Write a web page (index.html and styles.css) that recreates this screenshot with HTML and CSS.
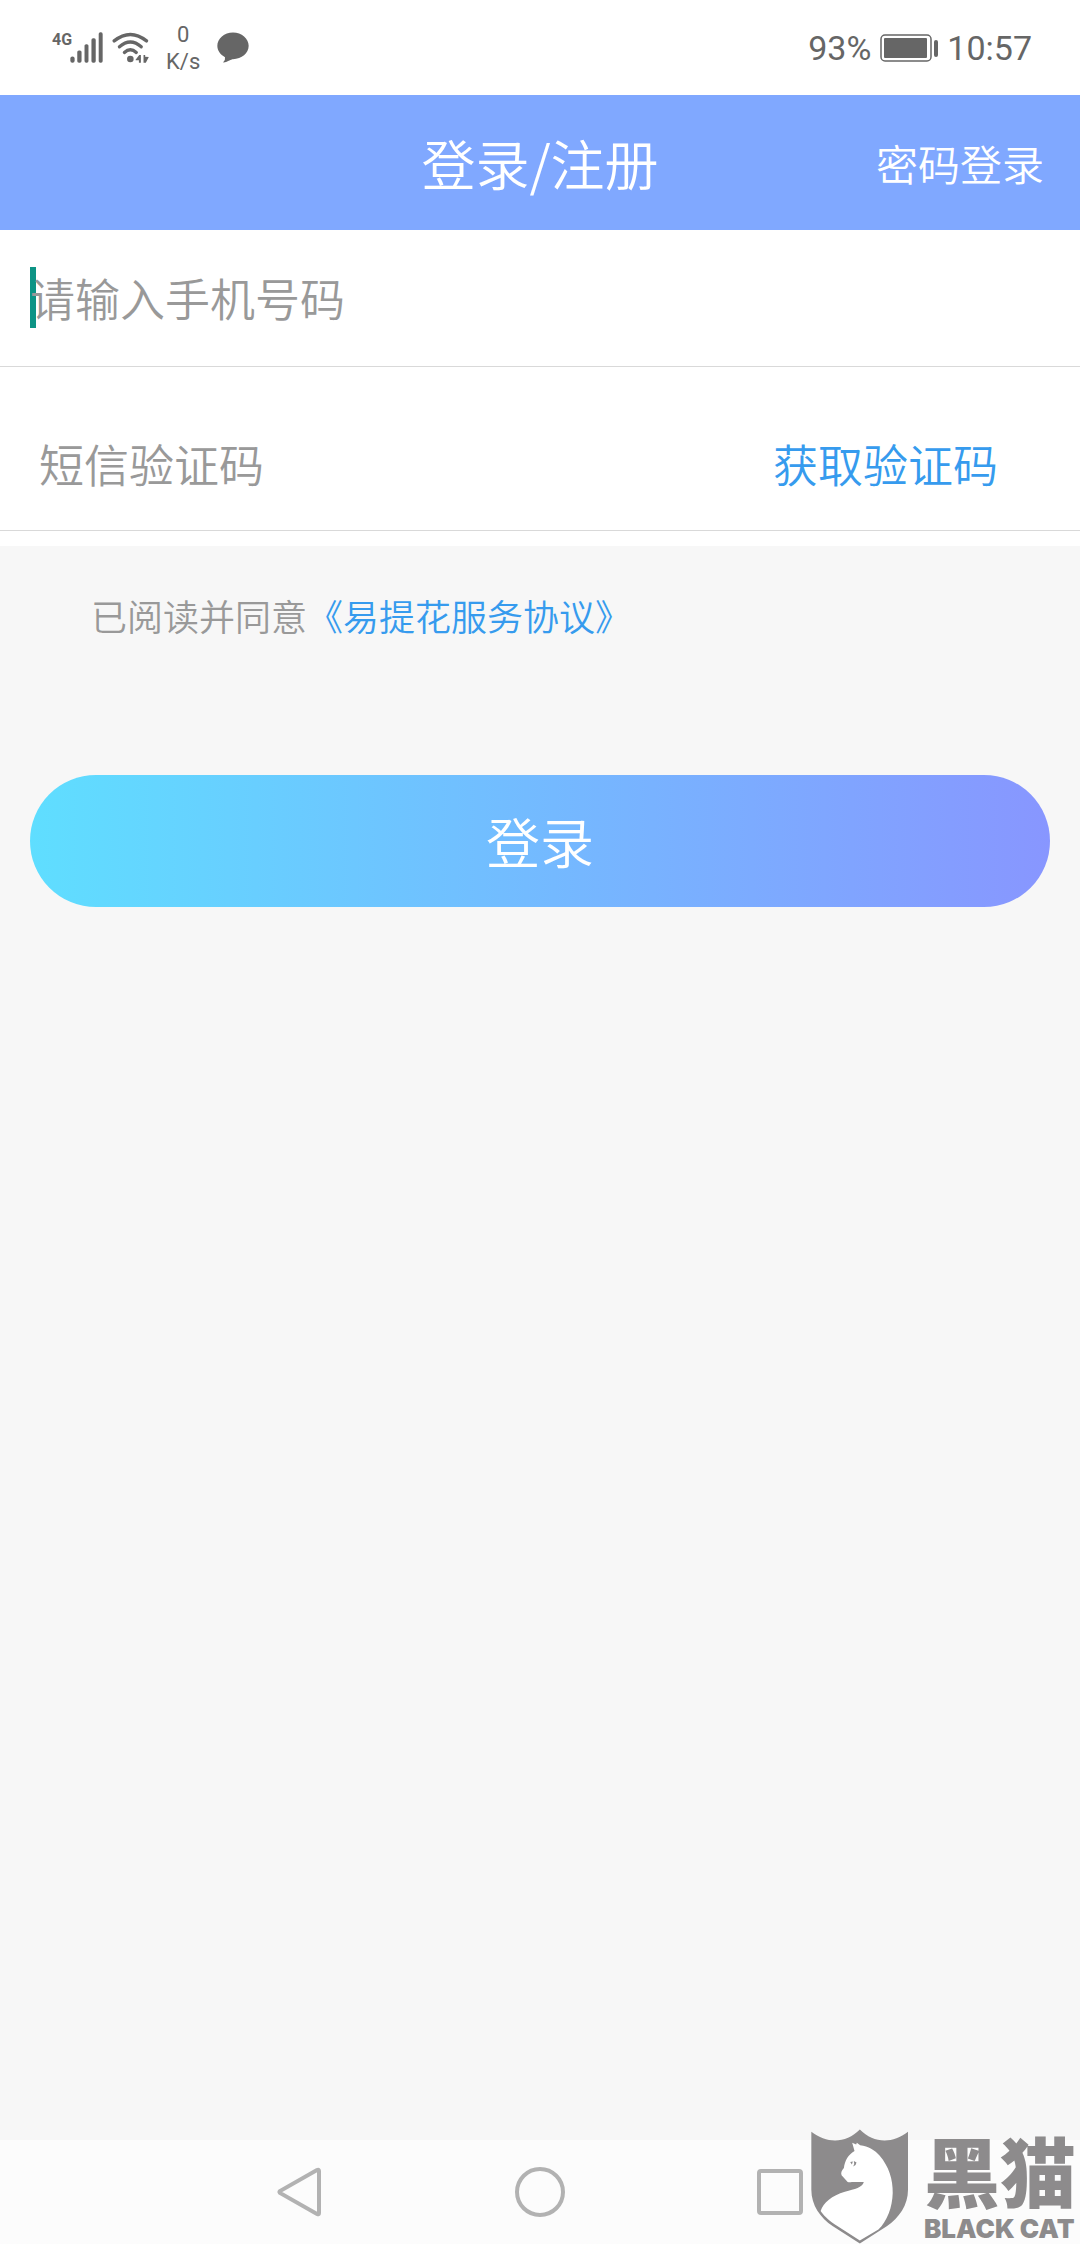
FILE: index.html
```html
<!DOCTYPE html>
<html lang="zh-CN">
<head>
<meta charset="utf-8">
<meta name="viewport" content="width=device-width, initial-scale=1">
<title>登录/注册</title>
<link rel="stylesheet" href="styles.css">
</head>
<body>
<div class="screen">
  <div class="status">
    <div class="status-group">
      <div class="mobile">
        <span class="network">4G</span>
        <svg class="signal" viewBox="121 64 100 94" aria-hidden="true">
          <rect x="122" y="138" width="13" height="19" rx="6"/>
          <rect x="143" y="120" width="13" height="37" rx="5"/>
          <rect x="165" y="101" width="12" height="56" rx="5"/>
          <rect x="186" y="83" width="13" height="74" rx="5"/>
          <rect x="208" y="65" width="12" height="92" rx="5"/>
        </svg>
      </div>
      <svg class="wifi" viewBox="247 64 111 94" aria-hidden="true">
        <g fill="none" stroke="currentColor" stroke-width="10" stroke-linecap="round">
          <path d="M253 91Q302 52 351 91"/>
          <path d="M269 109Q302 80 335 109"/>
          <path d="M284 126Q302 109 320 126"/>
        </g>
        <circle cx="302" cy="146" r="10"/>
        <path d="M318 148L329 134H334V157H328V150H318ZM342 134H347V139L358 140L349 157H342Z"/>
      </svg>
      <div class="speed"><span>0</span><span>K/s</span></div>
      <svg class="bubble" viewBox="565 68 96 92" aria-hidden="true">
        <path d="M613 69C639 69 660 87 660 109S639 149 613 149C606 149 601 156 583 159Q591 151 589 143C575 136 566 123 566 109C566 87 587 69 613 69Z"/>
      </svg>
    </div>
    <div class="status-group">
      <span class="reading">93%</span>
      <svg class="battery" viewBox="0 0 58 28" aria-hidden="true">
        <rect x="1" y="1" width="50" height="26" rx="4" fill="none" stroke="currentColor" stroke-width="1.5"/>
        <rect x="4" y="4" width="43" height="20" rx="1"/>
        <rect x="54" y="6" width="4" height="17" rx="2"/>
      </svg>
      <span class="reading">10:57</span>
    </div>
  </div>

  <header class="bar">
    <h1 class="bar-title">登录/注册</h1>
    <a class="bar-link" href="#password">密码登录</a>
  </header>

  <main>
    <form class="login">
      <div class="fields">
        <div class="field">
          <input class="input" type="tel" placeholder="请输入手机号码" aria-label="手机号码">
          <span class="caret"></span>
        </div>
        <div class="field field-code">
          <input class="input" type="text" placeholder="短信验证码" aria-label="短信验证码">
          <button class="get-code" type="button">获取验证码</button>
        </div>
      </div>
      <p class="terms">已阅读并同意<a class="terms-link" href="#terms">《易提花服务协议》</a></p>
      <button class="submit" type="submit">登录</button>
    </form>
  </main>

  <nav class="keys">
    <button class="key" type="button" aria-label="返回">
      <svg viewBox="0 0 52 52"><path d="M43 4Q45 3 45 5V47Q45 49 43 48L6 27Q5 26 6 25Z"/></svg>
    </button>
    <button class="key" type="button" aria-label="主页">
      <svg viewBox="0 0 52 52"><circle cx="26" cy="26" r="23"/></svg>
    </button>
    <button class="key" type="button" aria-label="最近任务">
      <svg viewBox="0 0 52 52"><rect x="5" y="5" width="42" height="42" rx="2"/></svg>
    </button>
  </nav>

  <div class="brand">
    <svg class="shield" viewBox="213 56 292 345" aria-hidden="true">
      <path fill="#8d8b8c" d="M214 64C262 101 319 99 360 57C401 99 458 101 505 64V238C505 285 478 322 441 348L360 400L279 348C241 322 214 285 214 238Z"/>
      <path fill="#fff" d="M337 97L349 102L351 97L361 104C386 107 405 118 420 136C447 168 460 207 459 248C458 291 442 333 416 358L360 391L284 342C263 327 250 314 242 302C250 277 276 255 315 244C346 236 367 232 372 215H336C328 217 323 216 320 211L305 195C302 187 306 180 312 173C315 151 325 133 344 122Z"/>
      <path fill="#8d8b8c" d="M331 155L339 153L336 162ZM342 152L350 156Q350 163 340 168Q345 160 342 152Z"/>
    </svg>
    <div class="brand-text">
      <span class="brand-name">黑猫</span>
      <span class="brand-latin">BLACK CAT</span>
    </div>
  </div>
</div>
</body>
</html>
```
FILE: styles.css
```css
* {
  box-sizing: border-box;
}

body {
  margin: 0;
  background: #f7f7f7;
  font-family: "Noto Sans CJK SC", sans-serif;
  font-weight: 350;
}

button,
input {
  margin: 0;
  padding: 0;
  border: 0;
  background: none;
  font: inherit;
}

a {
  text-decoration: none;
}

.screen {
  position: relative;
  display: flex;
  flex-direction: column;
  min-height: 100vh;
}

main {
  flex: 1;
}

/* Status bar */

.status {
  display: flex;
  justify-content: space-between;
  align-items: center;
  height: 95px;
  padding: 0 48px 0 52px;
  background: #fff;
  color: #666;
  font-family: Roboto, sans-serif;
  font-weight: 400;
}

.status svg {
  display: block;
  fill: currentColor;
}

.status-group {
  display: flex;
  align-items: center;
}

.mobile {
  display: flex;
  align-items: flex-start;
}

.network {
  width: 18px;
  font-size: 16px;
  line-height: 16px;
  font-weight: 700;
}

.signal {
  width: 33px;
  height: 31px;
}

.wifi {
  width: 37px;
  height: 31px;
  margin-left: 9px;
}

.speed {
  display: flex;
  flex-direction: column;
  align-items: center;
  margin: 0 17px;
  font-size: 22px;
  line-height: 27px;
}

.bubble {
  width: 32px;
  height: 31px;
}

.reading {
  font-size: 34px;
  line-height: 40px;
}

.battery {
  width: 58px;
  height: 28px;
  margin: 0 9px;
}

/* Title bar */

.bar {
  display: grid;
  grid-template-columns: 1fr auto 1fr;
  align-items: center;
  height: 135px;
  padding: 0 36px;
  background: #80a8ff;
  color: #fff;
}

.bar-title {
  grid-column: 2;
  margin: 0;
  font-size: 54px;
  line-height: 64px;
  font-weight: inherit;
}

.bar-link {
  justify-self: end;
  color: inherit;
  font-size: 42px;
  line-height: 64px;
}

/* Form */

.login {
  display: flex;
  flex-direction: column;
}

.fields {
  padding-bottom: 15px;
  background: #fff;
}

.field {
  position: relative;
  display: flex;
  align-items: center;
  height: 137px;
  padding: 0 30px;
  border-bottom: 1px solid #d9d9d9;
  font-size: 45px;
  line-height: 60px;
}

.field-code {
  height: 164px;
  padding: 30px 82px 0 39px;
}

.input {
  flex: 1;
  min-width: 0;
  height: 60px;
  outline: 0;
  color: #333;
}

.input::placeholder {
  color: #999;
  opacity: 1;
}

.caret {
  position: absolute;
  left: 30px;
  top: 37px;
  z-index: -1;
  width: 6px;
  height: 61px;
  background: #0d9485;
}

.field:first-child {
  z-index: 0;
}

.get-code {
  color: #369bee;
}

.terms {
  margin: 42px 91px 0;
  color: #999;
  font-size: 36px;
  line-height: 54px;
}

.terms-link {
  color: #369bee;
}

.submit {
  height: 132px;
  margin: 133px 30px 0;
  border-radius: 66px;
  background: linear-gradient(to right, #5fdeff, #8896ff);
  color: #fff;
  font-size: 54px;
  line-height: 64px;
}

/* Navigation keys */

.keys {
  display: flex;
  justify-content: center;
  align-items: center;
  gap: 188px;
  height: 104px;
  background: #fcfcfc;
}

.key {
  width: 52px;
  height: 52px;
}

.key svg {
  display: block;
  fill: none;
  stroke: #b2b2b2;
  stroke-width: 4;
}

/* Brand mark over the lower right corner */

.brand {
  position: absolute;
  right: 0;
  bottom: 0;
  display: flex;
  gap: 16px;
  color: #8d8b8c;
}

.shield {
  width: 97px;
  height: 115px;
}

.brand-text {
  display: flex;
  flex-direction: column;
  gap: 8px;
  width: 156px;
  font-weight: 900;
  white-space: nowrap;
}

.brand-name {
  font-size: 76px;
  line-height: 80px;
}

.brand-latin {
  font-family: Inter, sans-serif;
  font-size: 26px;
  line-height: 24px;
}
```
